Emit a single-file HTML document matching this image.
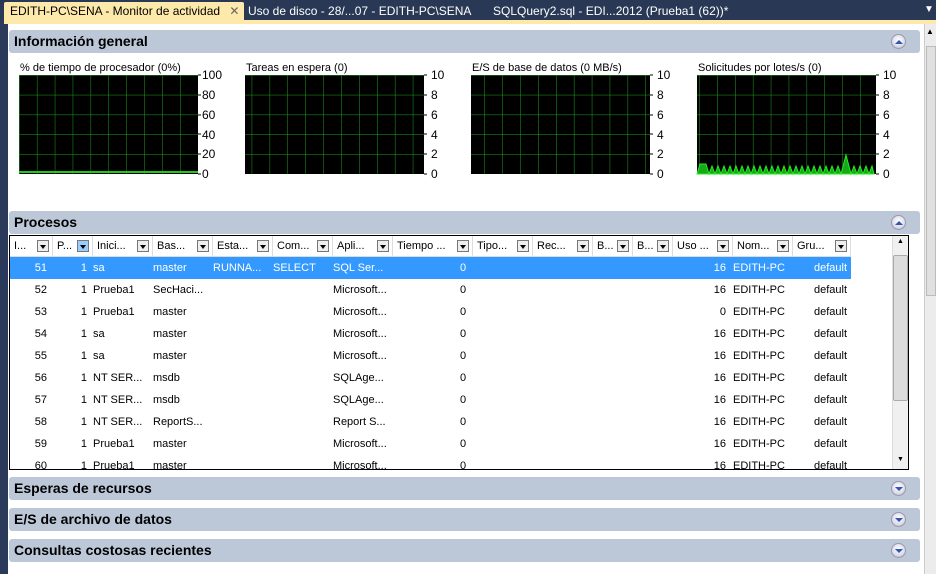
<!DOCTYPE html>
<html><head><meta charset="utf-8"><style>
*{margin:0;padding:0;box-sizing:border-box}
body{width:936px;height:574px;overflow:hidden;background:#2b3a5a;font-family:"Liberation Sans",sans-serif;font-size:11px;position:relative}
.abs{position:absolute}
.tabbar{left:0;top:0;width:936px;height:20px;background:#293955}
.tab1{left:4px;top:2px;width:240px;height:19px;background:#fde9a9;border-radius:2px 2px 0 0;color:#000;font-size:12px;line-height:19px;padding-left:6px}
.tabt{color:#fff;font-size:12px;line-height:19px;top:2px}
.yl{left:4px;top:20px;width:932px;height:4px;background:#fde9a9}
.main{left:8px;top:24px;width:916px;height:550px;background:#fff}
.vs{left:924px;top:24px;width:12px;height:550px;background:#ececec;border-left:1px solid #ccc}
.bar{left:9px;width:911px;height:23px;background:#bcc7d8;border-radius:3px;font-weight:bold;font-size:14px;line-height:23px;padding-left:5px;color:#000}
.btn{position:absolute;right:14px;top:4px;width:15px;height:15px;border-radius:50%;background:radial-gradient(circle at 50% 40%,#fff,#dde 60%,#9aa);border:1px solid #99a}
.btn:after{content:"";position:absolute;left:3px;top:4px;border:4px solid transparent}
.up:after{border-bottom:4px solid #35a;top:1px}
.dn:after{border-top:4px solid #35a;top:5px}
.lbl{font-size:11px;color:#000}
.ax{font-size:12px;color:#000;text-align:left}
.grid{left:9px;top:235px;width:900px;height:235px;border:1px solid #000;background:#fff;overflow:hidden}
.hdr{position:absolute;top:0;height:21px;border-right:1px solid #ddd;border-bottom:1px solid #ddd;font-size:11px;line-height:20px;padding-left:4px;background:#fff}
.dd{position:absolute;right:3px;top:4px;width:12px;height:12px;border:1px solid #777;background:#eee}
.dd:after{content:"";position:absolute;left:2px;top:4px;border:3px solid transparent;border-top:4px solid #000}
.row{position:absolute;left:0;width:841px;height:22px;font-size:11px;line-height:22px}
.row span{position:absolute;white-space:nowrap}
.sel{background:#3399ff;color:#fff}
</style></head><body>
<div class="abs tabbar"></div>
<div class="abs tab1">EDITH-PC\SENA - Monitor de actividad <span style="color:#666;margin-left:6px">✕</span></div>
<div class="abs tabt" style="left:248px">Uso de disco - 28/...07 - EDITH-PC\SENA</div>
<div class="abs tabt" style="left:493px">SQLQuery2.sql - EDI...2012 (Prueba1 (62))*</div>
<div class="abs" style="left:924px;top:4px;color:#fff;font-size:10px">▼</div>
<div class="abs yl"></div>
<div class="abs main"></div>
<div class="abs vs"><div style="position:absolute;left:1px;top:22px;width:10px;height:250px;background:#e0e0e0;border:1px solid #bbb"></div></div>
<div class="abs" style="left:926px;top:27px;font-size:8px">▲</div>

<div class="abs bar" style="top:30px">Información general<div class="btn up"></div></div>

<svg class="abs" style="left:0;top:60px" width="920" height="125">
<defs><pattern id="g" x="19" y="15" width="17.9" height="19.8" patternUnits="userSpaceOnUse"><path d="M0 0V19.8M0 0H17.9" stroke="#1ea01e" stroke-width="1" fill="none"/></pattern></defs>
<g font-family="Liberation Sans" font-size="11">
<text x="20" y="11">% de tiempo de procesador (0%)</text>
<text x="246" y="11">Tareas en espera (0)</text>
<text x="472" y="11">E/S de base de datos (0 MB/s)</text>
<text x="698" y="11">Solicitudes por lotes/s (0)</text>
</g>
<g>
<rect x="19" y="15" width="179" height="99" fill="#000"/><rect x="19" y="15" width="179" height="99" fill="url(#g)"/>
<rect x="245" y="15" width="179" height="99" fill="#000"/><rect x="245" y="15" width="179" height="99" fill="url(#g)" transform="translate(0,0)"/>
<rect x="471" y="15" width="179" height="99" fill="#000"/><rect x="471" y="15" width="179" height="99" fill="url(#g)"/>
<rect x="697" y="15" width="179" height="99" fill="#000"/><rect x="697" y="15" width="179" height="99" fill="url(#g)"/>
<path d="M19 112 L198 112" stroke="#1ec81e" stroke-width="2"/>
<path d="M697 114 L700 104 L706 104 L709 114 L712 106 L715 114 L718 106 L721 114 L724 106 L727 114 L730 106 L733 114 L736 106 L739 114 L742 106 L745 114 L748 106 L751 114 L754 106 L757 114 L760 106 L763 114 L766 106 L769 114 L772 106 L775 114 L778 106 L781 114 L784 106 L787 114 L790 106 L793 114 L796 106 L799 114 L802 106 L805 114 L808 106 L811 114 L814 106 L817 114 L820 106 L823 114 L826 106 L829 114 L832 106 L835 114 L838 106 L841 114 L846 95 L851 114 L854 106 L857 114 L860 106 L863 114 L866 106 L869 114 L872 106 L874 114 Z" fill="#18a818" stroke="#2e2" stroke-width="1"/>
</g>
<g font-family="Liberation Sans" font-size="12" fill="#000">
<text x="202" y="19">100</text><text x="202" y="39">80</text><text x="202" y="59">60</text><text x="202" y="79">40</text><text x="202" y="98">20</text><text x="202" y="118">0</text>
<text x="431" y="19">10</text><text x="431" y="39">8</text><text x="431" y="59">6</text><text x="431" y="79">4</text><text x="431" y="98">2</text><text x="431" y="118">0</text>
<text x="657" y="19">10</text><text x="657" y="39">8</text><text x="657" y="59">6</text><text x="657" y="79">4</text><text x="657" y="98">2</text><text x="657" y="118">0</text>
<text x="883" y="19">10</text><text x="883" y="39">8</text><text x="883" y="59">6</text><text x="883" y="79">4</text><text x="883" y="98">2</text><text x="883" y="118">0</text>
</g>
<g stroke="#000"><path d="M198 15h3M198 35h3M198 55h3M198 74h3M198 94h3M198 114h3M424 15h3M424 35h3M424 55h3M424 74h3M424 94h3M424 114h3M650 15h3M650 35h3M650 55h3M650 74h3M650 94h3M650 114h3M876 15h3M876 35h3M876 55h3M876 74h3M876 94h3M876 114h3"/></g>
</svg>

<div class="abs bar" style="top:211px">Procesos<div class="btn up"></div></div>

<div class="abs grid">
<div class="hdr" style="left:0;width:43px">I...<div class="dd"></div></div>
<div class="hdr" style="left:43px;width:40px">P...<div class="dd" style="background:#9cf"></div></div>
<div class="hdr" style="left:83px;width:60px">Inici...<div class="dd"></div></div>
<div class="hdr" style="left:143px;width:60px">Bas...<div class="dd"></div></div>
<div class="hdr" style="left:203px;width:60px">Esta...<div class="dd"></div></div>
<div class="hdr" style="left:263px;width:60px">Com...<div class="dd"></div></div>
<div class="hdr" style="left:323px;width:60px">Apli...<div class="dd"></div></div>
<div class="hdr" style="left:383px;width:80px">Tiempo ...<div class="dd"></div></div>
<div class="hdr" style="left:463px;width:60px">Tipo...<div class="dd"></div></div>
<div class="hdr" style="left:523px;width:60px">Rec...<div class="dd"></div></div>
<div class="hdr" style="left:583px;width:40px">B...<div class="dd"></div></div>
<div class="hdr" style="left:623px;width:40px">B...<div class="dd"></div></div>
<div class="hdr" style="left:663px;width:60px">Uso ...<div class="dd"></div></div>
<div class="hdr" style="left:723px;width:60px">Nom...<div class="dd"></div></div>
<div class="hdr" style="left:783px;width:58px">Gru...<div class="dd"></div></div>
<div style="position:absolute;left:882px;top:0;width:16px;height:233px;background:#f0f0f0;border-left:1px solid #ddd"><div style="position:absolute;left:0;top:19px;width:15px;height:146px;background:#dcdcdc;border:1px solid #aaa;border-radius:2px"></div><div style="position:absolute;left:4px;top:2px;font-size:7px">▲</div><div style="position:absolute;left:4px;top:220px;font-size:7px">▼</div></div>
<div id="rows"></div>
</div>

<div class="abs bar" style="top:477px">Esperas de recursos<div class="btn dn"></div></div>
<div class="abs bar" style="top:508px">E/S de archivo de datos<div class="btn dn"></div></div>
<div class="abs bar" style="top:539px">Consultas costosas recientes<div class="btn dn"></div></div>

<script>
var d=[["51","sa","master","RUNNA...","SELECT","SQL Ser...","16"],["52","Prueba1","SecHaci...","","","Microsoft...","16"],["53","Prueba1","master","","","Microsoft...","0"],["54","sa","master","","","Microsoft...","16"],["55","sa","master","","","Microsoft...","16"],["56","NT SER...","msdb","","","SQLAge...","16"],["57","NT SER...","msdb","","","SQLAge...","16"],["58","NT SER...","ReportS...","","","Report S...","16"],["59","Prueba1","master","","","Microsoft...","16"],["60","Prueba1","master","","","Microsoft...","16"]];
var h="";d.forEach(function(r,i){h+='<div class="row'+(i==0?' sel':'')+'" style="top:'+(21+i*22)+'px"><span style="right:804px">'+r[0]+'</span><span style="right:764px">1</span><span style="left:83px">'+r[1]+'</span><span style="left:143px">'+r[2]+'</span><span style="left:203px">'+r[3]+'</span><span style="left:263px">'+r[4]+'</span><span style="left:323px">'+r[5]+'</span><span style="left:450px">0</span><span style="right:125px">'+r[6]+'</span><span style="left:723px">EDITH-PC</span><span style="right:4px">default</span></div>';});
document.getElementById("rows").innerHTML=h;
</script>
</body></html>
